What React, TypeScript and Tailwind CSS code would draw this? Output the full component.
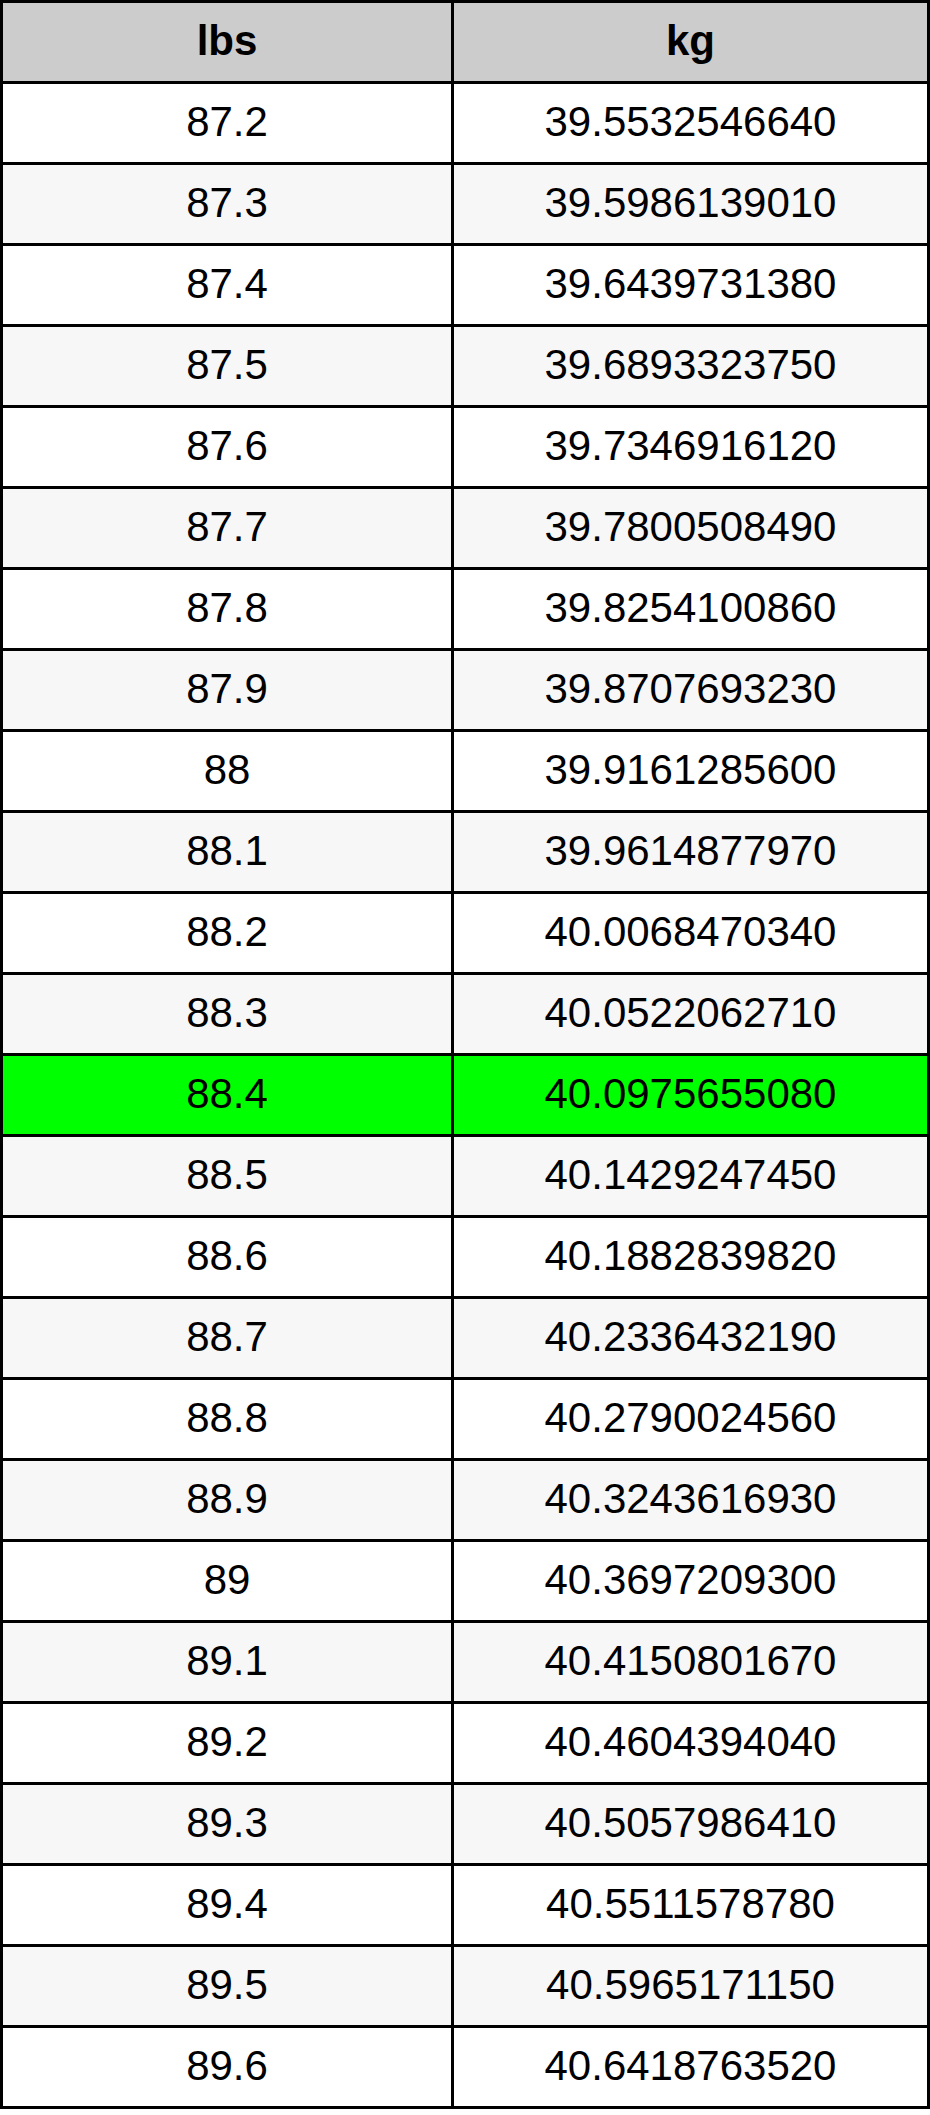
const rows: [string, string][] = [
  ['87.2', '39.5532546640'],
  ['87.3', '39.5986139010'],
  ['87.4', '39.6439731380'],
  ['87.5', '39.6893323750'],
  ['87.6', '39.7346916120'],
  ['87.7', '39.7800508490'],
  ['87.8', '39.8254100860'],
  ['87.9', '39.8707693230'],
  ['88', '39.9161285600'],
  ['88.1', '39.9614877970'],
  ['88.2', '40.0068470340'],
  ['88.3', '40.0522062710'],
  ['88.4', '40.0975655080'],
  ['88.5', '40.1429247450'],
  ['88.6', '40.1882839820'],
  ['88.7', '40.2336432190'],
  ['88.8', '40.2790024560'],
  ['88.9', '40.3243616930'],
  ['89', '40.3697209300'],
  ['89.1', '40.4150801670'],
  ['89.2', '40.4604394040'],
  ['89.3', '40.5057986410'],
  ['89.4', '40.5511578780'],
  ['89.5', '40.5965171150'],
  ['89.6', '40.6418763520'],
];

const cell =
  'flex h-[81px] items-center justify-center pb-[3px] border-r-[3px] border-b-[3px] border-black';

export default function App() {
  return (
    <div
      className="w-[930px] bg-white text-black"
      style={{ fontFamily: '"Liberation Sans", Arial, sans-serif' }}
    >
      <div className="grid grid-cols-[451px_476px] border-t-[3px] border-l-[3px] border-black text-[42px]">
        <div className={`${cell} bg-[#cccccc] font-bold`}>lbs</div>
        <div className={`${cell} bg-[#cccccc] font-bold`}>kg</div>
        {rows.map(([lbs, kg], i) => {
          const bg =
            lbs === '88.4' ? 'bg-[#00ff00]' : i % 2 === 1 ? 'bg-[#f7f7f7]' : 'bg-white';
          return (
            <div key={lbs} className="contents">
              <div className={`${cell} ${bg}`}>{lbs}</div>
              <div className={`${cell} ${bg}`}>{kg}</div>
            </div>
          );
        })}
      </div>
    </div>
  );
}
